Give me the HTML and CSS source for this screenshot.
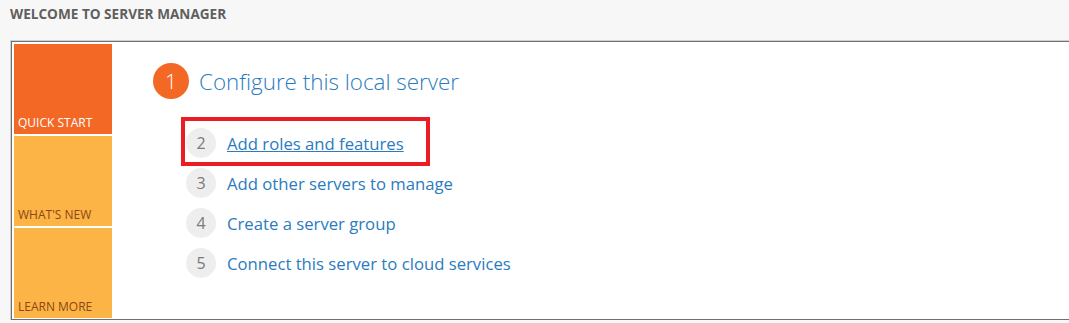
FILE: index.html
```html
<!DOCTYPE html>
<html lang="en">
<head>
    <meta charset="UTF-8">
    <title>Server Manager</title>
    <link rel="stylesheet" href="styles.css">
</head>
<body>
    <div class="page-title">WELCOME TO SERVER MANAGER</div>
    <div class="welcome">
        <div class="tiles">
            <div class="tile tile-quick">QUICK START</div>
            <div class="tile tile-new">WHAT'S NEW</div>
            <div class="tile tile-learn">LEARN MORE</div>
        </div>
        <div class="steps">
            <div class="step-main">
                <span class="num num-main">1</span>
                <span class="step-main-text">Configure this local server</span>
            </div>
            <ul class="step-list">
                <li class="step highlighted"><span class="num">2</span><a href="#" class="step-link">Add roles and features</a></li>
                <li class="step"><span class="num">3</span><span class="step-text">Add other servers to manage</span></li>
                <li class="step"><span class="num">4</span><span class="step-text">Create a server group</span></li>
                <li class="step"><span class="num">5</span><span class="step-text">Connect this server to cloud services</span></li>
            </ul>
        </div>
    </div>
</body>
</html>
```

FILE: styles.css
```css
body {
    margin: 0;
    overflow: hidden;
    background-color: #f7f7f7;
    font-family: "Open Sans", "Noto Sans", sans-serif;
}
.page-title {
    padding: 4px 10px 0 10px;
    height: 24px;
    font-size: 13.6px;
    font-weight: bold;
    color: #5f5f5f;
}
.welcome {
    display: flex;
    margin: 13px -6px 0 11px;
    padding: 1px;
    background-color: white;
    border: 1px solid #6f6f6f;
    box-shadow: 0 0 0 1px #d0d0d0;
}
.tiles {
    display: flex;
    flex-direction: column;
    gap: 2px;
    width: 98px;
    margin-left: 1px;
    margin-top: 1px;
}
.tile {
    height: 90px;
    box-sizing: border-box;
    display: flex;
    align-items: flex-end;
    padding: 0 0 3px 4px;
    font-size: 12px;
}
.tile-quick {
    background-color: #f46825;
    color: white;
}
.tile-new, .tile-learn {
    background-color: #fdb446;
    color: #8a4714;
}
.steps {
    padding: 20px 0 0 41px;
}
.step-main {
    display: flex;
    align-items: center;
    gap: 10px;
}
.num {
    display: flex;
    align-items: center;
    justify-content: center;
    width: 30px;
    height: 30px;
    border-radius: 50%;
    background-color: #eeeeee;
    color: #7a7a7a;
    font-size: 16px;
}
.num-main {
    width: 36px;
    height: 36px;
    background-color: #f46825;
    color: white;
    font-size: 21px;
    font-weight: 300;
}
.step-main-text {
    font-size: 22.4px;
    font-weight: 300;
    color: #2a7bc0;
}
.step-list {
    list-style: none;
    margin: 29px 0 0 33px;
    padding: 0;
    display: flex;
    flex-direction: column;
    gap: 10px;
}
.step {
    display: flex;
    align-items: center;
    gap: 11px;
    font-size: 16.7px;
    color: #2a7bc0;
    position: relative;
    align-self: flex-start;
}
.step-link {
    color: #2a7bc0;
}
.highlighted::after {
    content: "";
    position: absolute;
    left: -5px;
    top: -11px;
    width: 241px;
    height: 41px;
    border: 4px solid #ec1c24;
}
```
